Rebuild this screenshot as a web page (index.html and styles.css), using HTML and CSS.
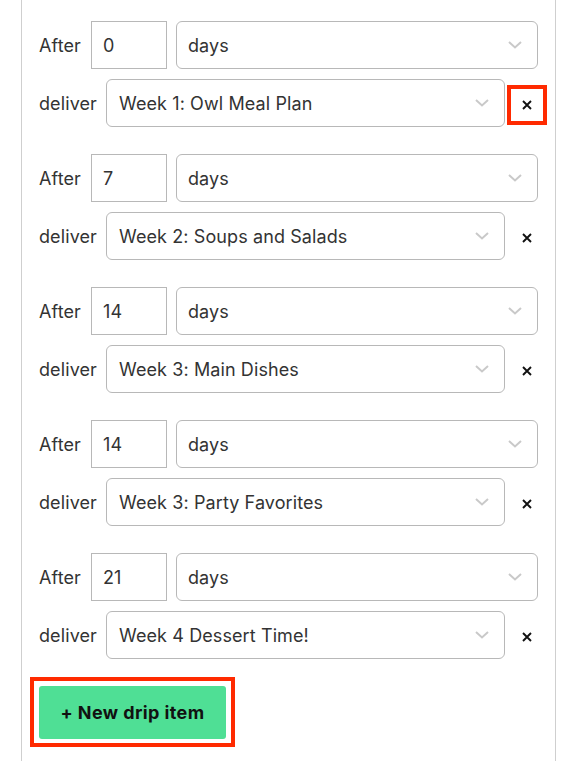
FILE: index.html
```html
<!DOCTYPE html>
<html lang="en">
<head>
<meta charset="utf-8">
<title>Drip items</title>
<link rel="stylesheet" href="styles.css">
</head>
<body>
<div class="panel">
  <div class="group">
    <div class="row">
      <span class="lbl lbl-after">After</span>
      <div class="num">0</div>
      <div class="select sel-days"><span>days</span><svg class="chev" viewBox="0 0 14 8"><path d="M1 1l6 5.5L13 1"/></svg></div>
    </div>
    <div class="row">
      <span class="lbl lbl-deliver">deliver</span>
      <div class="select sel-item"><span>Week 1: Owl Meal Plan</span><svg class="chev" viewBox="0 0 14 8"><path d="M1 1l6 5.5L13 1"/></svg></div>
      <div class="close highlight"><svg class="x" viewBox="0 0 10 10"><path d="M1 1l8 8M9 1l-8 8"/></svg></div>
    </div>
  </div>
  <div class="group">
    <div class="row">
      <span class="lbl lbl-after">After</span>
      <div class="num">7</div>
      <div class="select sel-days"><span>days</span><svg class="chev" viewBox="0 0 14 8"><path d="M1 1l6 5.5L13 1"/></svg></div>
    </div>
    <div class="row">
      <span class="lbl lbl-deliver">deliver</span>
      <div class="select sel-item"><span>Week 2: Soups and Salads</span><svg class="chev" viewBox="0 0 14 8"><path d="M1 1l6 5.5L13 1"/></svg></div>
      <div class="close"><svg class="x" viewBox="0 0 10 10"><path d="M1 1l8 8M9 1l-8 8"/></svg></div>
    </div>
  </div>
  <div class="group">
    <div class="row">
      <span class="lbl lbl-after">After</span>
      <div class="num">14</div>
      <div class="select sel-days"><span>days</span><svg class="chev" viewBox="0 0 14 8"><path d="M1 1l6 5.5L13 1"/></svg></div>
    </div>
    <div class="row">
      <span class="lbl lbl-deliver">deliver</span>
      <div class="select sel-item"><span>Week 3: Main Dishes</span><svg class="chev" viewBox="0 0 14 8"><path d="M1 1l6 5.5L13 1"/></svg></div>
      <div class="close"><svg class="x" viewBox="0 0 10 10"><path d="M1 1l8 8M9 1l-8 8"/></svg></div>
    </div>
  </div>
  <div class="group">
    <div class="row">
      <span class="lbl lbl-after">After</span>
      <div class="num">14</div>
      <div class="select sel-days"><span>days</span><svg class="chev" viewBox="0 0 14 8"><path d="M1 1l6 5.5L13 1"/></svg></div>
    </div>
    <div class="row">
      <span class="lbl lbl-deliver">deliver</span>
      <div class="select sel-item"><span>Week 3: Party Favorites</span><svg class="chev" viewBox="0 0 14 8"><path d="M1 1l6 5.5L13 1"/></svg></div>
      <div class="close"><svg class="x" viewBox="0 0 10 10"><path d="M1 1l8 8M9 1l-8 8"/></svg></div>
    </div>
  </div>
  <div class="group group-last">
    <div class="row">
      <span class="lbl lbl-after">After</span>
      <div class="num">21</div>
      <div class="select sel-days"><span>days</span><svg class="chev" viewBox="0 0 14 8"><path d="M1 1l6 5.5L13 1"/></svg></div>
    </div>
    <div class="row">
      <span class="lbl lbl-deliver">deliver</span>
      <div class="select sel-item"><span>Week 4 Dessert Time!</span><svg class="chev" viewBox="0 0 14 8"><path d="M1 1l6 5.5L13 1"/></svg></div>
      <div class="close"><svg class="x" viewBox="0 0 10 10"><path d="M1 1l8 8M9 1l-8 8"/></svg></div>
    </div>
  </div>
  <div class="actions">
    <span class="mark">
      <button class="add-btn" type="button">+ New drip item</button>
    </span>
  </div>
</div>
</body>
</html>
```
FILE: styles.css
```css
html, body {
  margin: 0;
  padding: 0;
  background: #ffffff;
}
body {
  font-family: "Inter", "DejaVu Sans", sans-serif;
  font-size: 18px;
  letter-spacing: 0.1px;
  color: #333333;
}
.panel {
  box-sizing: border-box;
  margin-left: 21px;
  width: 535px;
  min-height: 761px;
  border-left: 1px solid #cfcfcf;
  border-right: 1px solid #cfcfcf;
  padding: 21px 17px 0 17px;
}
.group {
  display: flex;
  flex-direction: column;
  gap: 10px;
  margin-bottom: 27px;
}
.group-last {
  margin-bottom: 18px;
}
.row {
  display: flex;
  align-items: center;
  height: 48px;
}
.lbl {
  flex: 0 0 auto;
  white-space: nowrap;
}
.lbl-after { width: 52px; }
.lbl-deliver { width: 67px; }
.num {
  box-sizing: border-box;
  flex: 0 0 76px;
  height: 48px;
  border: 1px solid #b8b8b8;
  padding-left: 11px;
  display: flex;
  align-items: center;
}
.select {
  box-sizing: border-box;
  height: 48px;
  border: 1px solid #b8b8b8;
  border-radius: 6px;
  display: flex;
  align-items: center;
  justify-content: space-between;
  padding: 0 15px 0 11px;
  white-space: nowrap;
}
.sel-days {
  flex: 0 0 362px;
  margin-left: 9px;
}
.sel-item {
  flex: 0 0 399px;
  padding-left: 12px;
}
.chev {
  width: 14px;
  height: 8px;
  fill: none;
  stroke: #c9c9c9;
  stroke-width: 2;
}
.close {
  box-sizing: border-box;
  flex: 0 0 40px;
  width: 40px;
  height: 40px;
  margin-left: 2px;
  margin-top: 3px;
  border: 4px solid transparent;
  display: flex;
  align-items: center;
  justify-content: center;
}
.close.highlight {
  border-color: #ff2a00;
}
.x {
  width: 10px;
  height: 10px;
  fill: none;
  stroke: #111111;
  stroke-width: 1.9;
}
.actions {
  display: flex;
  margin-left: -9px;
}
.mark {
  display: inline-flex;
  border: 4px solid #ff2a00;
  padding: 5px 5px 4px 5px;
}
.add-btn {
  width: 187px;
  height: 53px;
  border: none;
  border-radius: 3px;
  background: #4fdf95;
  color: #111111;
  font-family: "Inter", "DejaVu Sans", sans-serif;
  font-size: 18px;
  font-weight: 700;
  letter-spacing: 0.4px;
  padding: 0;
}
```
